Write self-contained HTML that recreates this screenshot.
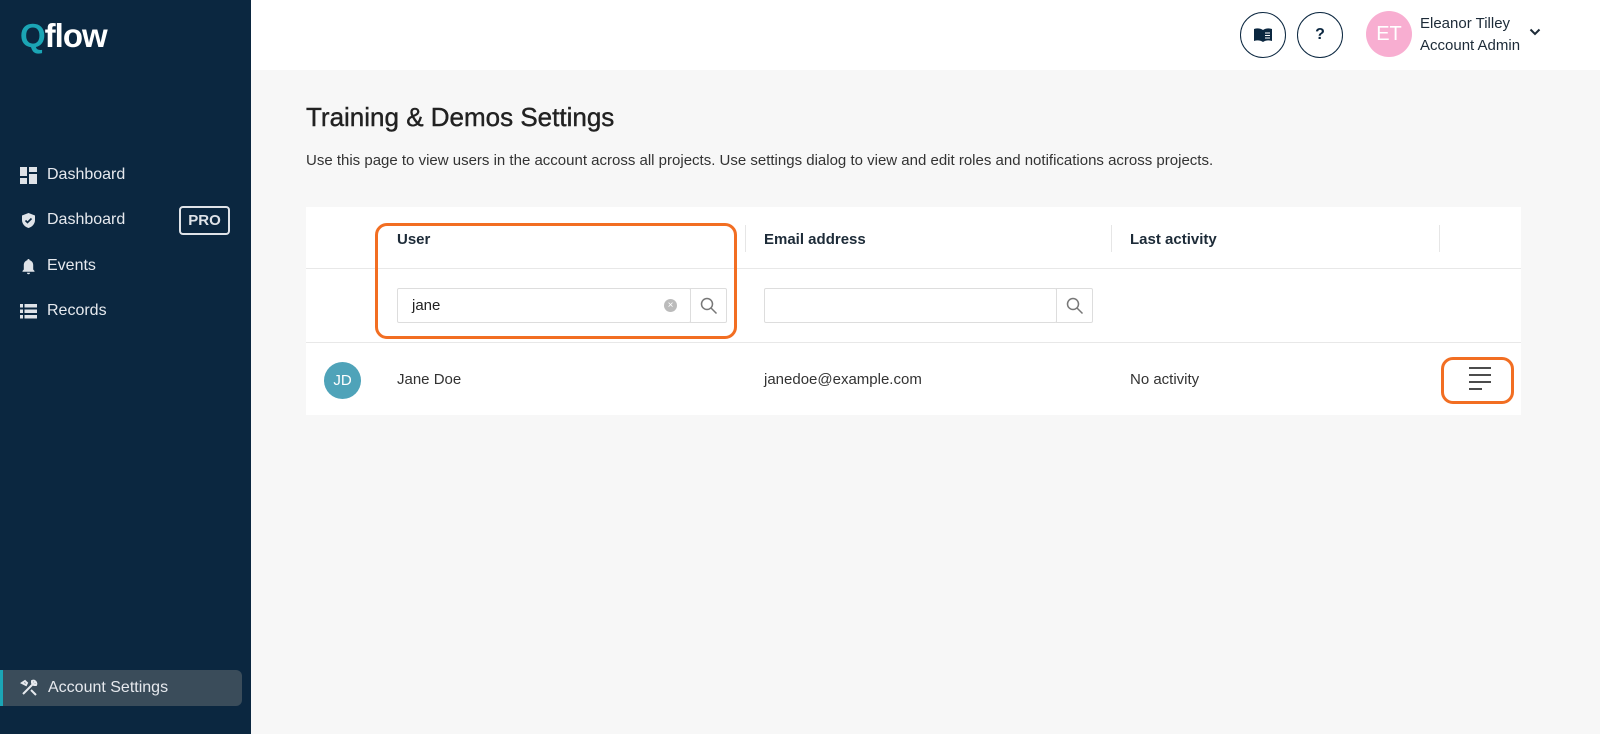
<!DOCTYPE html>
<html><head><meta charset="utf-8"><style>
*{box-sizing:border-box;margin:0;padding:0}
body{width:1600px;height:734px;overflow:hidden;background:#f7f7f7;font-family:"Liberation Sans",sans-serif;position:relative;color:#222}
.side{position:absolute;left:0;top:0;width:251px;height:734px;background:#0b2740}
.logo{position:absolute;left:20px;top:17px;font-size:33px;font-weight:bold;color:#fff;letter-spacing:-1px}
.logo span{color:#1ba5b5}
.nav{position:absolute;left:20px;color:#e6e9ee;font-size:16px;display:flex;align-items:center}
.nav svg{margin-right:10px}
.pro{position:absolute;left:179px;top:206px;width:51px;height:29px;border:2px solid #dfe3e8;border-radius:4px;color:#dfe3e8;font-weight:bold;font-size:15px;text-align:center;line-height:25px}
.acct{position:absolute;left:0;top:670px;width:242px;height:36px;background:#3a4c5a;border-radius:0 6px 6px 0;border-left:3px solid #1ba5b5}
.top{position:absolute;left:251px;top:0;right:0;height:70px;background:#fff}
.circ{position:absolute;top:12px;width:46px;height:46px;border:1.5px solid #0b2740;border-radius:50%;display:flex;align-items:center;justify-content:center;font-weight:bold;color:#0b2740;font-size:16px}
h1{position:absolute;left:306px;top:102px;font-size:26px;font-weight:normal;color:#222;-webkit-text-stroke:0.4px #222}
.desc{position:absolute;left:306px;top:152px;font-size:15px;color:#333}
.table{position:absolute;left:306px;top:207px;width:1215px;height:208px;background:#fff}
.hl{position:absolute;left:0;width:1215px;height:1px;background:#e8e8e8}
.th{position:absolute;top:231px;font-size:15px;font-weight:bold;color:#1d2b38}
.sep{position:absolute;top:225px;width:1px;height:27px;background:#e6e6e6}
.inp{position:absolute;top:288px;height:35px;border:1px solid #ddd;border-radius:2px;background:#fff}
.btn{position:absolute;top:288px;width:37px;height:35px;border:1px solid #ddd;border-radius:0 2px 2px 0;background:#fff;display:flex;align-items:center;justify-content:center}
.td{position:absolute;top:371px;font-size:15px;color:#333}
.ob{position:absolute;border:3px solid #f26e22;border-radius:12px}
</style></head><body>
<div class="side">
<div class="logo"><span>Q</span>flow</div>
<div class="nav" style="top:166px"><svg width="17" height="17" viewBox="0 0 17 17" fill="#dfe3e8"><rect x="0" y="0" width="7" height="9"/><rect x="9" y="0" width="8" height="5"/><rect x="0" y="11" width="7" height="6"/><rect x="9" y="7" width="8" height="10"/></svg>Dashboard</div>
<div class="nav" style="top:211px"><svg width="17" height="17" viewBox="0 0 17 17"><path d="M8.5 1L15 3.5V8c0 4-3 7-6.5 8C5 15 2 12 2 8V3.5z" fill="#dfe3e8"/><path d="M5.5 8.5l2 2 4-4" stroke="#0b2740" stroke-width="1.6" fill="none"/></svg>Dashboard</div>
<div class="pro">PRO</div>
<div class="nav" style="top:257px"><svg width="17" height="17" viewBox="0 0 17 17" fill="#dfe3e8"><path d="M8.5 1c-.7 0-1.2.5-1.2 1.2C5 2.8 3.8 4.8 3.8 7v4.5L2.5 13v.8h12V13l-1.3-1.5V7c0-2.2-1.2-4.2-3.5-4.8C9.7 1.5 9.2 1 8.5 1zM7 14.8a1.5 1.5 0 003 0z"/></svg>Events</div>
<div class="nav" style="top:302px"><svg width="17" height="17" viewBox="0 0 17 17" fill="#dfe3e8"><rect x="0" y="1" width="3" height="3.5"/><rect x="4.5" y="1" width="12.5" height="3.5"/><rect x="0" y="6.5" width="3" height="3.5"/><rect x="4.5" y="6.5" width="12.5" height="3.5"/><rect x="0" y="12" width="3" height="3.5"/><rect x="4.5" y="12" width="12.5" height="3.5"/></svg>Records</div>
<div class="acct"></div>
<div class="nav" style="top:679px"><svg width="18" height="18" viewBox="0 0 18 18" stroke="#e6e9ee" stroke-width="2" fill="none"><path d="M3 15L15 3M2 4l3-2 2 2-1 2zM16 16l-5-5"/><path d="M12 2a3 3 0 014 4l-2 0-2-2z"/></svg>Account Settings</div>
</div>
<div class="top">
<div class="circ" style="left:989px"><svg width="20" height="16" viewBox="0 0 20 16"><path d="M1 2c3-1 6-1 9 1v12c-3-2-6-2-9-1z" fill="#0b2740"/><path d="M10 3c3-2 6-2 9-1v12c-3-1-6-1-9 1z" fill="#0b2740"/><path d="M12 6h5M12 8.5h5M12 11h5" stroke="#fff" stroke-width="1"/></svg></div>
<div class="circ" style="left:1046px">?</div>
<div style="position:absolute;left:1115px;top:11px;width:46px;height:46px;border-radius:50%;background:#f8aed1;color:#fff;font-size:20px;display:flex;align-items:center;justify-content:center">ET</div>
<div style="position:absolute;left:1169px;top:13px;font-size:15px;color:#1d2b38;line-height:22px">Eleanor Tilley<br>Account Admin</div>
<svg style="position:absolute;left:1278px;top:28px" width="12" height="8" viewBox="0 0 12 8"><path d="M1.5 1.5l4.5 4.5 4.5-4.5" stroke="#1d2b38" stroke-width="2" fill="none"/></svg>
</div>
<h1>Training &amp; Demos Settings</h1>
<div class="desc">Use this page to view users in the account across all projects. Use settings dialog to view and edit roles and notifications across projects.</div>
<div class="table">
<div class="hl" style="top:61px"></div>
<div class="hl" style="top:135px"></div>
</div>
<div class="th" style="left:397px">User</div>
<div class="th" style="left:764px">Email address</div>
<div class="th" style="left:1130px">Last activity</div>
<div class="sep" style="left:745px"></div>
<div class="sep" style="left:1111px"></div>
<div class="sep" style="left:1439px"></div>
<div class="inp" style="left:397px;width:294px;padding:8px 0 0 14px;font-size:15px">jane</div>
<div style="position:absolute;left:664px;top:299px;width:13px;height:13px;border-radius:50%;background:#bbb;color:#fff;font-size:10px;line-height:13px;text-align:center">×</div>
<div class="btn" style="left:690px"><svg width="18" height="18" viewBox="0 0 18 18" stroke="#777" stroke-width="1.5" fill="none"><circle cx="7" cy="7" r="5.5"/><path d="M11 11l5.5 5.5"/></svg></div>
<div class="inp" style="left:764px;width:293px"></div>
<div class="btn" style="left:1056px"><svg width="18" height="18" viewBox="0 0 18 18" stroke="#777" stroke-width="1.5" fill="none"><circle cx="7" cy="7" r="5.5"/><path d="M11 11l5.5 5.5"/></svg></div>
<div style="position:absolute;left:324px;top:362px;width:37px;height:37px;border-radius:50%;background:#4fa3b9;color:#fff;font-size:15px;display:flex;align-items:center;justify-content:center">JD</div>
<div class="td" style="left:397px">Jane Doe</div>
<div class="td" style="left:764px">janedoe@example.com</div>
<div class="td" style="left:1130px">No activity</div>
<svg style="position:absolute;left:1467px;top:366px" width="26" height="26" viewBox="0 0 26 26" stroke="#111" stroke-width="1.5"><path d="M2 2h22M2 9h22M2 16h22M2 23h13"/></svg>
<div class="ob" style="left:375px;top:223px;width:362px;height:116px"></div>
<div class="ob" style="left:1441px;top:357px;width:73px;height:47px"></div>
</body></html>
